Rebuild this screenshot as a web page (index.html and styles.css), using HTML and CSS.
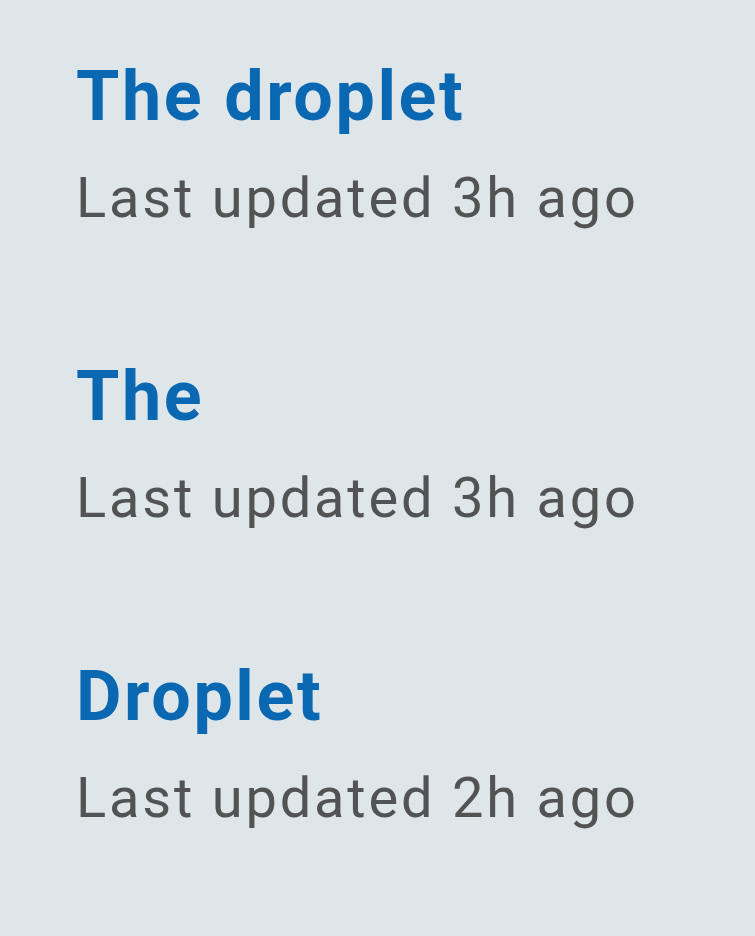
FILE: index.html
```html
<!DOCTYPE html>
<html lang="en">
<head>
  <meta charset="UTF-8" />
  <title>Droplets</title>
  <link rel="stylesheet" href="styles.css">
</head>
<body>

<div class="list">
  <div class="item">
    <a class="title" href="#">The droplet</a>
    <div class="meta">Last updated 3h ago</div>
  </div>

  <div class="item">
    <a class="title" href="#">The</a>
    <div class="meta">Last updated 3h ago</div>
  </div>

  <div class="item">
    <a class="title" href="#">Droplet</a>
    <div class="meta">Last updated 2h ago</div>
  </div>
</div>

</body>
</html>
```

FILE: styles.css
```css
html, body {
  height: 100%;
}
body {
  margin: 0;
  background: #dfe6e9;
  font-family: Roboto, 'Noto Sans', sans-serif;
}
.list {
  display: flex;
  flex-direction: column;
  gap: 122px;
  padding: 54px 0 0 76px;
}
.item {
  display: flex;
  flex-direction: column;
  gap: 27px;
}
.title {
  font-size: 70px;
  line-height: 84px;
  font-weight: bold;
  letter-spacing: 2.6px;
  color: #0a68b2;
  text-decoration: none;
}
.meta {
  font-size: 56px;
  line-height: 67px;
  letter-spacing: 2.8px;
  color: #525354;
}
```
